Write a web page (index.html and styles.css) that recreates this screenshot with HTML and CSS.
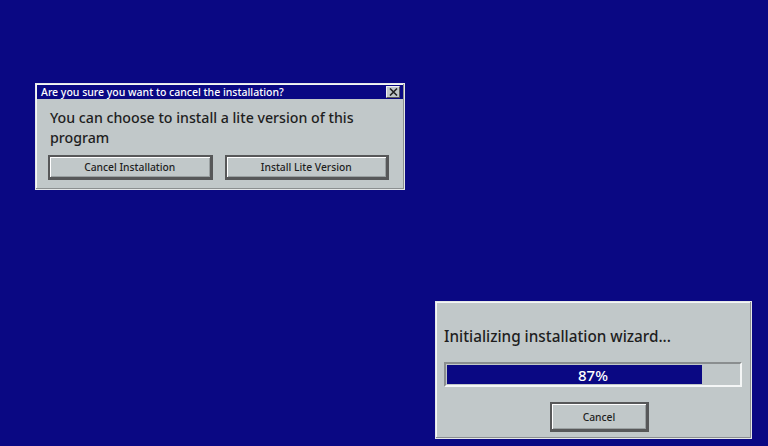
FILE: index.html
```html
<!DOCTYPE html>
<html>
<head>
<meta charset="utf-8">
<link rel="stylesheet" href="styles.css">
</head>
<body>
<div class="desktop">
  <div class="window dialog-cancel">
    <div class="titlebar">
      <span class="title">Are you sure you want to cancel the installation?</span>
      <span class="close-btn">
        <svg width="9" height="8" viewBox="0 0 9 8"><path d="M1 0.5 L8 7.5 M8 0.5 L1 7.5" stroke="#222" stroke-width="1.6"/></svg>
      </span>
    </div>
    <div class="dialog-body">
      <p class="message">You can choose to install a lite version of this program</p>
      <div class="btn-row">
        <button class="btn btn-wide">Cancel Installation</button>
        <button class="btn btn-wide">Install Lite Version</button>
      </div>
    </div>
  </div>

  <div class="window dialog-progress">
    <p class="message">Initializing installation wizard...</p>
    <div class="progress">
      <div class="progress-fill" style="width: 87%"></div>
      <span class="progress-label">87%</span>
    </div>
    <div class="cancel-row">
      <button class="btn btn-cancel">Cancel</button>
    </div>
  </div>
</div>
</body>
</html>
```

FILE: styles.css
```css
html, body {
  margin: 0;
  padding: 0;
}
body {
  background: #0a0883;
  font-family: "Noto Sans", "Open Sans", sans-serif;
  color: #1e1e1e;
}
.desktop {
  position: relative;
  width: 768px;
  height: 446px;
  overflow: hidden;
}
.window {
  position: absolute;
  box-sizing: border-box;
  background: #c1c8c9;
  border: 1px solid #e4e7e7;
  box-shadow: inset -1px -1px #8b8f90, inset 1px 1px #f4f6f6;
}
.dialog-cancel {
  left: 35px;
  top: 83px;
  width: 370px;
  height: 107px;
  padding: 1px;
}
.titlebar {
  height: 14px;
  background: #0a0883;
  display: flex;
  align-items: center;
  justify-content: space-between;
  padding: 0 3px 0 4px;
}
.title {
  color: #fff;
  font-size: 10.5px;
  line-height: 14px;
  font-weight: 500;
  white-space: nowrap;
}
.close-btn {
  width: 12px;
  height: 10px;
  background: #c1c8c9;
  border: 1px solid #f0f0f0;
  border-right-color: #555;
  border-bottom-color: #555;
  display: flex;
  align-items: center;
  justify-content: center;
}
.dialog-body {
  padding: 9px 14px 0 11px;
}
.message {
  margin: 0;
  font-size: 14.2px;
  line-height: 20px;
  font-weight: 500;
  padding-left: 2px;
  color: #1e1e1e;
}
.btn-row {
  display: flex;
  gap: 12px;
  margin-top: 7px;
}
.btn {
  box-sizing: border-box;
  background: #c1c8c9;
  border: 2px solid #575859;
  border-right-width: 3px;
  border-bottom-width: 3px;
  box-shadow: inset 1px 1px #ffffff, inset -1px -1px #9aa0a1;
  font-family: "Noto Sans", "Open Sans", sans-serif;
  font-size: 10.3px;
  font-weight: 500;
  color: #1e1e1e;
  padding: 0;
}
.btn-wide {
  width: 166px;
  height: 25px;
}
.dialog-progress {
  left: 435px;
  top: 301px;
  width: 317px;
  height: 138px;
  padding: 23px 8px 0 8px;
}
.dialog-progress .message {
  padding-left: 0;
  font-size: 15.3px;
  line-height: 22px;
}
.progress {
  position: relative;
  margin-top: 15px;
  height: 25px;
  box-sizing: border-box;
  border: 2px solid #8a8e8f;
  border-right-color: #f4f6f6;
  border-bottom-color: #f4f6f6;
  padding: 1px 0 1px 1px;
  width: 298px;
}
.progress-fill {
  height: 100%;
  background: #0a0883;
}
.progress-label {
  position: absolute;
  left: 0;
  right: 0;
  top: 0;
  bottom: 0;
  display: flex;
  align-items: center;
  justify-content: center;
  color: #fff;
  font-size: 15px;
  font-weight: 500;
}
.cancel-row {
  margin-top: 15px;
  padding-left: 106px;
}
.btn-cancel {
  width: 99px;
  height: 30px;
  font-size: 10.3px;
}
```
